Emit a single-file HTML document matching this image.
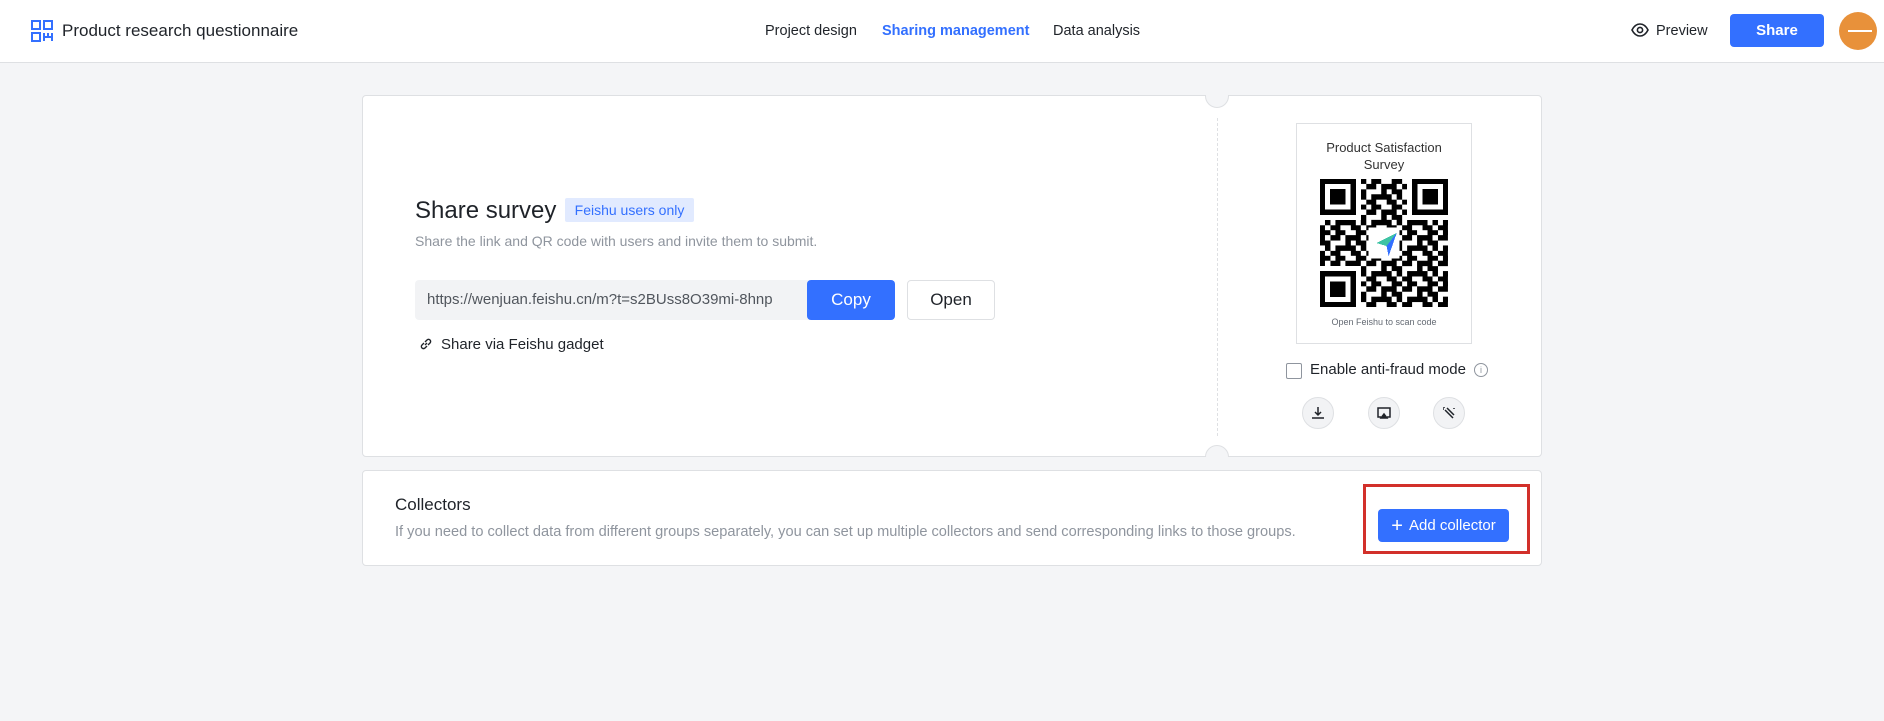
<!DOCTYPE html>
<html><head><meta charset="utf-8"><style>
*{box-sizing:border-box;margin:0;padding:0}
body{width:1884px;height:721px;background:#f4f5f7;font-family:"Liberation Sans",sans-serif;color:#1f2329;position:relative;overflow:hidden}
.hdr{position:absolute;left:0;top:0;width:1884px;height:63px;background:#fff;border-bottom:1px solid #dee0e3}
.a{position:absolute;white-space:nowrap}
.card{position:absolute;background:#fff;border:1px solid #dee0e3;border-radius:4px}
.btn{position:absolute;border-radius:4px;display:flex;align-items:center;justify-content:center}
.ic{position:absolute;width:32px;height:32px;border-radius:50%;background:#f2f3f5;border:1px solid #dee0e3;display:flex;align-items:center;justify-content:center}
</style></head><body>
<div class="hdr">
 <svg class="a" style="left:31px;top:20px" width="22" height="22" viewBox="0 0 22 22" fill="none" stroke="#3370ff" stroke-width="2"><rect x="1" y="1" width="8" height="8"/><rect x="13" y="1" width="8" height="8"/><rect x="1" y="13" width="8" height="8"/><path d="M13 13v8M13 17h8M17 13v4M21 13v8"/></svg>
 <div class="a" style="left:62px;top:21px;font-size:17px">Product research questionnaire</div>
 <div class="a" style="left:765px;top:23px;font-size:14.5px">Project design</div>
 <div class="a" style="left:882px;top:23px;font-size:14.5px;color:#3370ff;font-weight:bold">Sharing management</div>
 <div class="a" style="left:1053px;top:23px;font-size:14.5px">Data analysis</div>
 <svg class="a" style="left:1631px;top:23px" width="18" height="14" viewBox="0 0 18 14" fill="none" stroke="#1f2329" stroke-width="1.6"><path d="M1 7C3 3 6 1 9 1s6 2 8 6c-2 4-5 6-8 6S3 11 1 7z"/><circle cx="9" cy="7" r="2.6"/></svg>
 <div class="a" style="left:1656px;top:23px;font-size:14.5px">Preview</div>
 <div class="btn" style="left:1730px;top:14px;width:94px;height:33px;background:#3370ff;color:#fff;font-size:15px;font-weight:bold">Share</div>
 <div class="a" style="left:1839px;top:12px;width:38px;height:38px;border-radius:50%;background:#e8913a"></div>
 <div class="a" style="left:1848px;top:30px;width:24px;height:2px;background:#fff"></div>
</div>

<div class="card" style="left:362px;top:95px;width:1180px;height:362px"></div>
<div class="a" style="left:1205px;top:84px;width:24px;height:24px;border-radius:50%;background:#f4f5f7;border:1px solid #dee0e3;clip-path:inset(11px 0 0 0)"></div>
<div class="a" style="left:1205px;top:445px;width:24px;height:24px;border-radius:50%;background:#f4f5f7;border:1px solid #dee0e3;clip-path:inset(0 0 12px 0)"></div>
<div class="a" style="left:1217px;top:118px;height:318px;border-left:1px dashed #dee0e3"></div>

<div class="a" style="left:415px;top:197px;font-size:24px">Share survey</div>
<div class="a" style="left:565px;top:198px;width:129px;height:24px;background:#e1eaff;color:#3370ff;font-size:14px;line-height:24px;text-align:center;border-radius:2px">Feishu users only</div>
<div class="a" style="left:415px;top:233px;font-size:14px;color:#8f959e">Share the link and QR code with users and invite them to submit.</div>
<div class="a" style="left:415px;top:280px;width:395px;height:40px;background:#f2f3f5;border-radius:4px 0 0 4px;font-size:15px;color:#51565d;line-height:40px;padding-left:12px">https://wenjuan.feishu.cn/m?t=s2BUss8O39mi-8hnp</div>
<div class="btn" style="left:807px;top:280px;width:88px;height:40px;background:#3370ff;color:#fff;font-size:17px">Copy</div>
<div class="btn" style="left:907px;top:280px;width:88px;height:40px;background:#fff;border:1px solid #dee0e3;font-size:17px">Open</div>
<svg class="a" style="left:419px;top:337px" width="14" height="14" viewBox="0 0 14 14" fill="none" stroke="#1f2329" stroke-width="1.4"><path d="M6 8l2-2M5 6L3 8a2 2 0 003 3l2-2M9 8l2-2a2 2 0 00-3-3L6 5"/></svg>
<div class="a" style="left:441px;top:336px;font-size:15px">Share via Feishu gadget</div>

<div class="a" style="left:1296px;top:123px;width:176px;height:221px;border:1px solid #dee0e3"></div>
<div class="a" style="left:1296px;top:139px;width:176px;text-align:center;font-size:13px;line-height:17px;color:#333;white-space:normal">Product Satisfaction<br>Survey</div>
<svg class="a" style="left:1320px;top:179px" width="128" height="128" viewBox="0 0 25 25" shape-rendering="crispEdges">
 <defs><pattern id="p" width="7" height="5" patternUnits="userSpaceOnUse"><rect x="0" y="0" width="2" height="1"/><rect x="3" y="0" width="1" height="2"/><rect x="5" y="1" width="2" height="1"/><rect x="1" y="2" width="1" height="2"/><rect x="4" y="3" width="2" height="1"/><rect x="0" y="4" width="1" height="1"/><rect x="6" y="3" width="1" height="2"/><rect x="2" y="4" width="2" height="1"/><rect x="2" y="1" width="1" height="1"/><rect x="5" y="2" width="1" height="1"/><rect x="4" y="0" width="1" height="1"/><rect x="0" y="1" width="1" height="2"/><rect x="3" y="3" width="1" height="1"/></pattern></defs>
 <rect width="25" height="25" fill="url(#p)"/>
 <g fill="#fff"><rect x="0" y="0" width="8" height="8"/><rect x="17" y="0" width="8" height="8"/><rect x="0" y="17" width="8" height="8"/><rect x="9.5" y="9.5" width="6" height="6"/></g>
 <g fill="none" stroke="#000"><rect x=".5" y=".5" width="6" height="6"/><rect x="18.5" y=".5" width="6" height="6"/><rect x=".5" y="18.5" width="6" height="6"/></g>
 <rect x="2" y="2" width="3" height="3"/><rect x="20" y="2" width="3" height="3"/><rect x="2" y="20" width="3" height="3"/>
 <path d="M15 10.5l-4 2 2 .6.4 2z" fill="#3370ff"/><path d="M11 12.5l2 .6L15 10.5z" fill="#3ec3a4"/>
</svg>
<div class="a" style="left:1296px;top:317px;width:176px;text-align:center;font-size:9px;color:#646a73">Open Feishu to scan code</div>
<div class="a" style="left:1286px;top:363px;width:16px;height:16px;border:1px solid #8f959e;border-radius:2px"></div>
<div class="a" style="left:1310px;top:361px;font-size:15px">Enable anti-fraud mode</div>
<div class="a" style="left:1474px;top:363px;width:14px;height:14px;border:1px solid #8f959e;border-radius:50%;font-size:9px;color:#8f959e;text-align:center;line-height:12px">i</div>
<div class="ic" style="left:1302px;top:397px"><svg width="16" height="16" viewBox="0 0 16 16" fill="none" stroke="#1f2329" stroke-width="1.5"><path d="M8 2v8M5 7l3 3 3-3M2 13h12"/></svg></div>
<div class="ic" style="left:1368px;top:397px"><svg width="16" height="16" viewBox="0 0 16 16" fill="none" stroke="#1f2329" stroke-width="1.5"><path d="M5 12H2V3h12v9h-3"/><path d="M5 13l3-4 3 4z" fill="#1f2329"/></svg></div>
<div class="ic" style="left:1433px;top:397px"><svg width="16" height="16" viewBox="0 0 16 16" fill="none" stroke="#1f2329" stroke-width="1.5"><path d="M4 5l8 8M6 3l7 7M3 2v1M2 4h1M13 3v1"/></svg></div>

<div class="card" style="left:362px;top:470px;width:1180px;height:96px"></div>
<div class="a" style="left:395px;top:495px;font-size:17px">Collectors</div>
<div class="a" style="left:395px;top:524px;font-size:14.6px;color:#8f959e">If you need to collect data from different groups separately, you can set up multiple collectors and send corresponding links to those groups.</div>
<div class="a" style="left:1363px;top:484px;width:167px;height:70px;border:3px solid #d2302a"></div>
<div class="btn" style="left:1378px;top:509px;width:131px;height:33px;background:#3370ff;color:#fff;font-size:15px"><span style="font-size:20px;margin-right:6px;line-height:1">+</span>Add collector</div>
</body></html>
